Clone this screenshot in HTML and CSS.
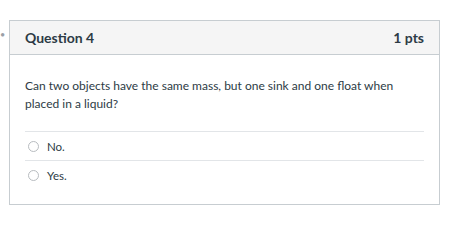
FILE: index.html
```html
<!DOCTYPE html>
<html lang="en">
<head>
    <meta charset="UTF-8">
    <title>Question 4</title>
    <link rel="stylesheet" href="styles.css">
</head>
<body>
    <div class="page">
        <span class="marker">&#8226;</span>
        <div class="question-card">
            <div class="question-header">
                <span class="question-title">Question 4</span>
                <span class="question-points">1 pts</span>
            </div>
            <div class="question-body">
                <div class="question-text">
                    Can two objects have the same mass, but one sink and one float when placed in a liquid?
                </div>
                <div class="answers">
                    <label class="answer">
                        <span class="radio"></span>
                        <span class="answer-text">No.</span>
                    </label>
                    <label class="answer">
                        <span class="radio"></span>
                        <span class="answer-text">Yes.</span>
                    </label>
                </div>
            </div>
        </div>
    </div>
</body>
</html>
```

FILE: styles.css
```css
body {
    background: #fff;
    font-family: Lato, "Liberation Sans", sans-serif;
    color: #2d3b45;
    margin: 0;
    padding: 0;
}
.page {
    display: flex;
    align-items: flex-start;
    padding-top: 20px;
}
.marker {
    width: 9px;
    margin-top: 9px;
    font-size: 9px;
    color: #9aa0a6;
}
.question-card {
    width: 429px;
    border: 1px solid #c7cdd1;
}
.question-header {
    display: flex;
    justify-content: space-between;
    align-items: center;
    height: 33px;
    padding: 0 15px;
    background: #f5f5f5;
    border-bottom: 1px solid #c7cdd1;
    font-weight: bold;
    font-size: 14px;
}
.question-body {
    padding: 22px 15px 15px 15px;
}
.question-text {
    font-size: 12px;
    line-height: 18px;
    padding-right: 18px;
    margin-bottom: 18px;
}
.answer {
    display: flex;
    align-items: center;
    height: 28px;
    border-top: 1px solid #e2e5e8;
    font-size: 11.5px;
}
.radio {
    width: 9px;
    height: 9px;
    margin: 0 8px 0 3px;
    border: 1px solid #b8bcc0;
    border-radius: 50%;
    background: #fff;
}
```
